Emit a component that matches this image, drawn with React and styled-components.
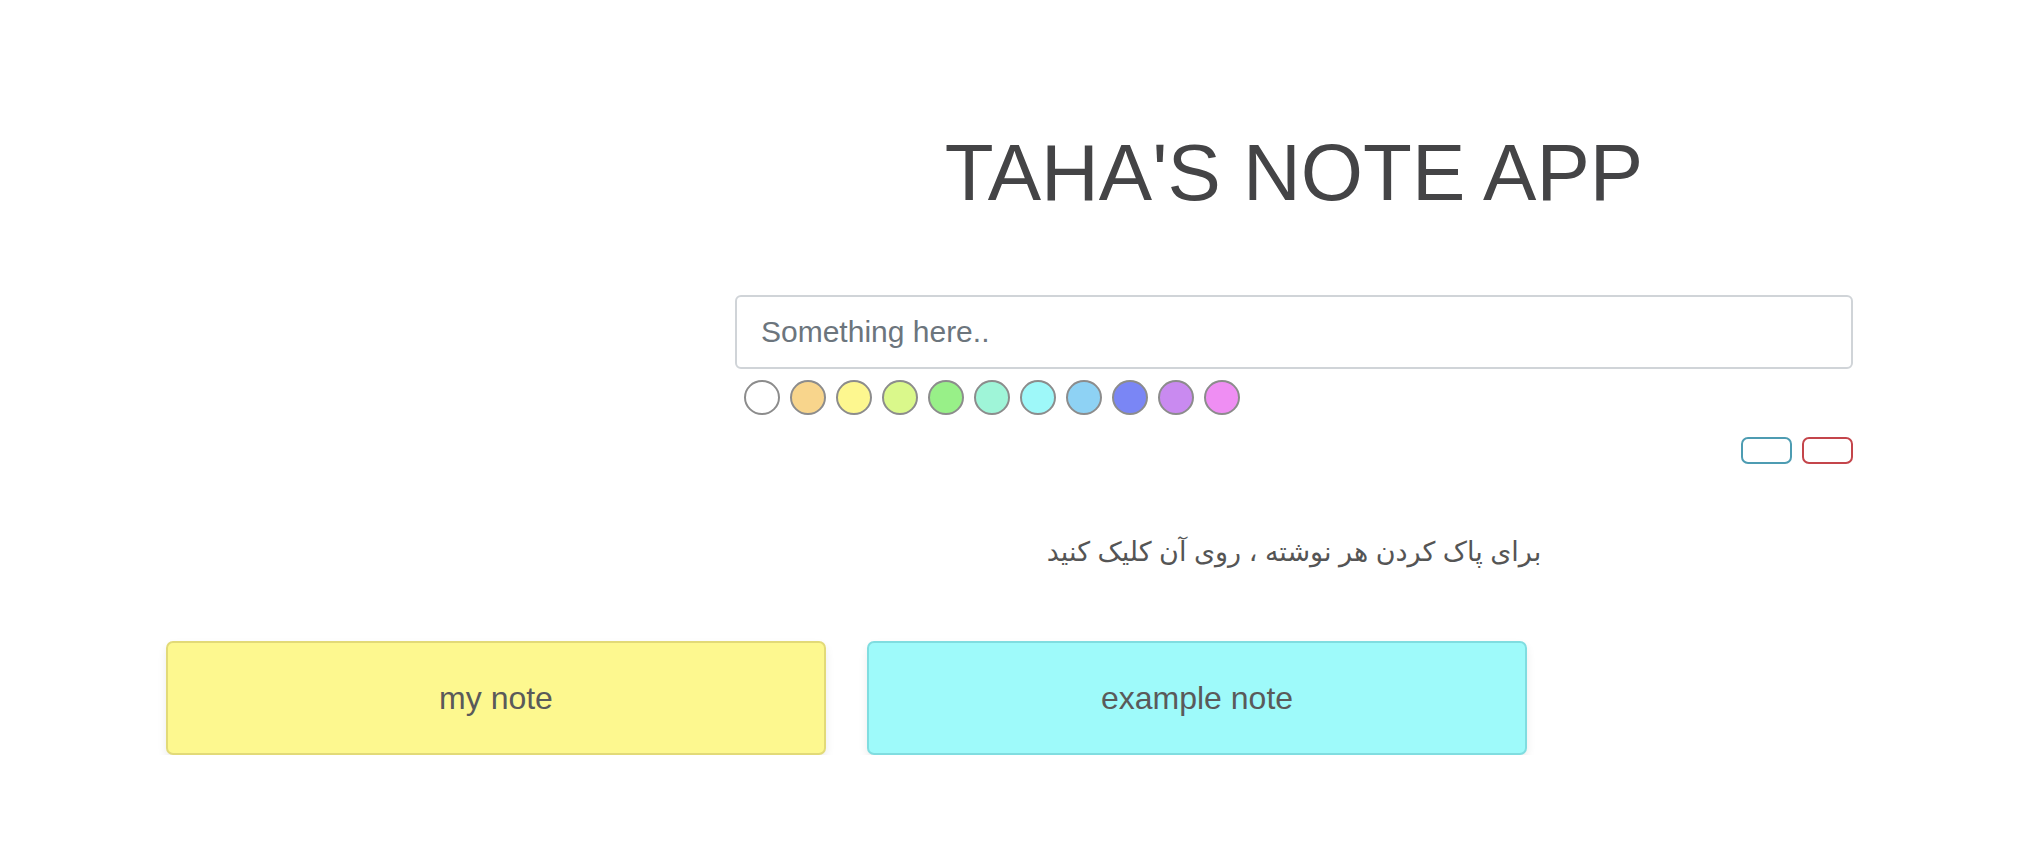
import React from 'react';
import styled, { createGlobalStyle } from 'styled-components';

const GlobalStyle = createGlobalStyle`
  body {
    margin: 0;
    background: #fff;
    font-family: "Liberation Sans", Arial, sans-serif;
  }
`;

const colors = [
  '#ffffff', '#f8d58c', '#fdf78f', '#daf88b', '#98f088', '#9ff5d8',
  '#9ef8f9', '#8ed2f4', '#7a86f5', '#c98af0', '#ef8ef3',
];

const notes = [
  { text: 'my note', bg: '#fdf88f', border: '#e2da78' },
  { text: 'example note', bg: '#9efafa', border: '#80dde0' },
];

const Page = styled.div`
  display: flex;
  flex-direction: column;
`;

const Form = styled.section`
  display: flex;
  flex-direction: column;
  width: 1118px;
  margin-left: 735px;
`;

const Title = styled.h1`
  margin: 127px 0 76px;
  font-size: 80px;
  font-weight: 400;
  line-height: 92px;
  color: #444446;
  text-align: center;
`;

const Input = styled.input`
  box-sizing: border-box;
  height: 74px;
  padding: 0 24px;
  border: 2px solid #d0d4d8;
  border-radius: 6px;
  font-family: "Liberation Sans", Arial, sans-serif;
  font-size: 30px;
  color: #333;
  outline: none;

  &::placeholder {
    color: #6c757d;
  }
`;

const Swatches = styled.div`
  display: flex;
  gap: 10px;
  margin: 11px 0 0 9px;
`;

const Swatch = styled.span`
  box-sizing: border-box;
  width: 36px;
  height: 35px;
  border-radius: 50%;
  border: 2px solid #8c8c8c;
  background: ${(p) => p.color};
`;

const Actions = styled.div`
  display: flex;
  justify-content: flex-end;
  gap: 10px;
  margin-top: 22px;
`;

const ActionButton = styled.button`
  box-sizing: border-box;
  width: 51px;
  height: 27px;
  padding: 0;
  background: transparent;
  border: 2px solid ${(p) => p.tone};
  border-radius: 7px;
  cursor: pointer;
`;

const Hint = styled.p`
  margin: 70px 0 71px;
  font-family: "Liberation Sans", "DejaVu Sans", "Noto Sans", sans-serif;
  font-size: 27px;
  line-height: 36px;
  color: #555;
  text-align: center;
`;

const NoteList = styled.div`
  display: flex;
  gap: 41px;
  padding: 0 0 0 166px;
`;

const Note = styled.div`
  box-sizing: border-box;
  display: flex;
  align-items: center;
  justify-content: center;
  width: 660px;
  height: 114px;
  background: ${(p) => p.bg};
  border: 2px solid ${(p) => p.border};
  border-radius: 7px;
  box-shadow: 0 5px 10px rgba(0, 0, 0, 0.08);
  font-size: 32px;
  color: #5a5a5a;
  cursor: pointer;
`;

export default function App() {
  return (
    <Page>
      <GlobalStyle />
      <Form>
        <Title>TAHA'S NOTE APP</Title>
        <Input placeholder="Something here.." />
        <Swatches>
          {colors.map((c) => (
            <Swatch key={c} color={c} />
          ))}
        </Swatches>
        <Actions>
          <ActionButton tone="#4d9cb2" />
          <ActionButton tone="#c4454b" />
        </Actions>
        <Hint dir="rtl">برای پاک کردن هر نوشته ، روی آن کلیک کنید</Hint>
      </Form>
      <NoteList>
        {notes.map((n) => (
          <Note key={n.text} bg={n.bg} border={n.border}>
            {n.text}
          </Note>
        ))}
      </NoteList>
    </Page>
  );
}
